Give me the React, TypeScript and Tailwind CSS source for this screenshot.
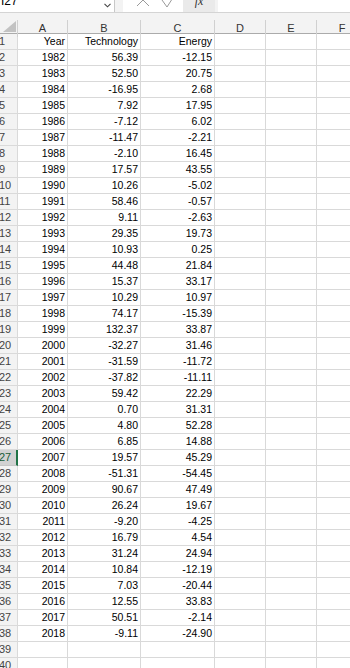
import React from "react";

const rows: [string, string, string][] = [
  ["1982", "56.39", "-12.15"],
  ["1983", "52.50", "20.75"],
  ["1984", "-16.95", "2.68"],
  ["1985", "7.92", "17.95"],
  ["1986", "-7.12", "6.02"],
  ["1987", "-11.47", "-2.21"],
  ["1988", "-2.10", "16.45"],
  ["1989", "17.57", "43.55"],
  ["1990", "10.26", "-5.02"],
  ["1991", "58.46", "-0.57"],
  ["1992", "9.11", "-2.63"],
  ["1993", "29.35", "19.73"],
  ["1994", "10.93", "0.25"],
  ["1995", "44.48", "21.84"],
  ["1996", "15.37", "33.17"],
  ["1997", "10.29", "10.97"],
  ["1998", "74.17", "-15.39"],
  ["1999", "132.37", "33.87"],
  ["2000", "-32.27", "31.46"],
  ["2001", "-31.59", "-11.72"],
  ["2002", "-37.82", "-11.11"],
  ["2003", "59.42", "22.29"],
  ["2004", "0.70", "31.31"],
  ["2005", "4.80", "52.28"],
  ["2006", "6.85", "14.88"],
  ["2007", "19.57", "45.29"],
  ["2008", "-51.31", "-54.45"],
  ["2009", "90.67", "47.49"],
  ["2010", "26.24", "19.67"],
  ["2011", "-9.20", "-4.25"],
  ["2012", "16.79", "4.54"],
  ["2013", "31.24", "24.94"],
  ["2014", "10.84", "-12.19"],
  ["2015", "7.03", "-20.44"],
  ["2016", "12.55", "33.83"],
  ["2017", "50.51", "-2.14"],
  ["2018", "-9.11", "-24.90"],
];

const grid = "grid grid-cols-[18px_50px_73px_74px_51px_51px_51px]";

function Cell({ children }: { children?: React.ReactNode }) {
  return (
    <div className="h-4 border-b border-r border-[#d9d9d9] pr-[2px] flex items-center justify-end overflow-hidden whitespace-nowrap text-[10.5px] text-black">
      {children}
    </div>
  );
}

function RowHead({ n }: { n: number }) {
  const active = n === 27;
  return (
    <div
      className={
        active
          ? "h-4 border-b border-r-2 border-b-[#c6c6c6] border-r-[#217346] bg-[#d2d2d2] text-[#185c37] flex items-center overflow-hidden text-[11px] pl-0"
          : "h-4 border-b border-r border-[#dadada] bg-[#f3f3f3] text-[#444] flex items-center overflow-hidden text-[11px] pl-0"
      }
    >
      <span className="-ml-[1px]">{n}</span>
    </div>
  );
}

export default function App() {
  const all: [string, string, string][] = [["Year", "Technology", "Energy"], ...rows, ["", "", ""], ["", "", ""]];
  return (
    <div className="w-[350px] h-[668px] overflow-hidden bg-white font-['Liberation_Sans',Arial,sans-serif]">
      {/* formula bar, top cut off */}
      <div className="h-[13px] overflow-hidden bg-[#f3f3f3] border-b border-[#d4d4d4]">
        <div className="flex h-[22px] -mt-[10px]">
          <div className="w-[115px] bg-white border-r border-[#c8c8c8] flex items-center relative">
            <span className="text-[12px] text-black pl-[1px]">I27</span>
            <svg className="absolute left-[104px] top-[13px]" width="7" height="5" viewBox="0 0 7 5">
              <path d="M0.5 0.8 L3.5 3.8 L6.5 0.8" stroke="#444" strokeWidth="1.1" fill="none" />
            </svg>
          </div>
          <div className="w-[8px]" />
          <div className="w-[60px] bg-white relative">
            <svg className="absolute left-[12px] top-[2px]" width="16" height="16" viewBox="0 0 16 16">
              <path d="M2 2 L14 14 M14 2 L2 14" stroke="#9a9a9a" strokeWidth="1" fill="none" />
            </svg>
            <svg className="absolute left-[38px] top-[2px]" width="16" height="16" viewBox="0 0 16 16">
              <path d="M1 8 L6 15 L15 1" stroke="#9a9a9a" strokeWidth="1" fill="none" />
            </svg>
          </div>
          <div className="w-[32px] bg-[#eaeaea] flex items-center justify-center">
            <span className="italic text-[12px] text-[#333] font-['Liberation_Serif',serif]">fx</span>
          </div>
          <div className="w-[3px]" />
          <div className="flex-1 bg-white" />
        </div>
      </div>
      <div className="h-[7px] bg-[#f3f3f3]" />
      {/* column headers */}
      <div className={grid + " h-[14px] bg-[#f3f3f3] border-b border-[#ababab]"}>
        <div className="relative border-r border-[#d0d0d0]">
          <svg className="absolute left-[3px] top-[1px]" width="13" height="11" viewBox="0 0 13 11">
            <path d="M13 0 L13 11 L0 11 Z" fill="#c2c2c2" />
          </svg>
        </div>
        {["A", "B", "C", "D", "E", "F"].map((c) => (
          <div key={c} className="border-r border-[#d0d0d0] flex items-center justify-center text-[11px] text-[#333]">
            {c}
          </div>
        ))}
      </div>
      {all.map((r, i) => (
        <div key={i} className={grid}>
          <RowHead n={i + 1} />
          <Cell>{r[0]}</Cell>
          <Cell>{r[1]}</Cell>
          <Cell>{r[2]}</Cell>
          <Cell />
          <Cell />
          <Cell />
        </div>
      ))}
    </div>
  );
}
